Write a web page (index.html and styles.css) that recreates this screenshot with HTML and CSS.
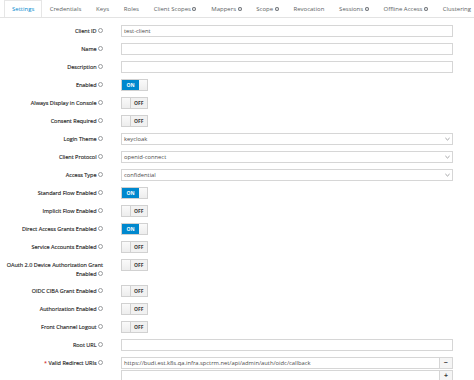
FILE: index.html
```html
<!DOCTYPE html>
<html>
<head>
<meta charset="utf-8">
<link rel="stylesheet" href="styles.css">
</head>
<body>
<div class="tabs">
  <span class="tab active">Settings</span>
  <span class="tab">Credentials</span>
  <span class="tab">Keys</span>
  <span class="tab">Roles</span>
  <span class="tab">Client Scopes <i class="thelp"></i></span>
  <span class="tab">Mappers <i class="thelp"></i></span>
  <span class="tab">Scope <i class="thelp"></i></span>
  <span class="tab">Revocation</span>
  <span class="tab">Sessions <i class="thelp"></i></span>
  <span class="tab">Offline Access <i class="thelp"></i></span>
  <span class="tab">Clustering</span>
</div>
<div class="form">
  <div class="row"><div class="lbl">Client ID <i class="help"></i></div><div class="input">test-client</div></div>
  <div class="row"><div class="lbl">Name <i class="help"></i></div><div class="input"></div></div>
  <div class="row"><div class="lbl">Description <i class="help"></i></div><div class="input"></div></div>
  <div class="row"><div class="lbl">Enabled <i class="help"></i></div><div class="ctl"><div class="switch"><span class="sw-on">ON</span><span class="knob"></span></div></div></div>
  <div class="row"><div class="lbl">Always Display in Console <i class="help"></i></div><div class="ctl"><div class="switch"><span class="knob"></span><span class="sw-off">OFF</span></div></div></div>
  <div class="row"><div class="lbl">Consent Required <i class="help"></i></div><div class="ctl"><div class="switch"><span class="knob"></span><span class="sw-off">OFF</span></div></div></div>
  <div class="row"><div class="lbl">Login Theme <i class="help"></i></div><div class="input select">keycloak<svg class="chev" viewBox="0 0 6 4" width="5" height="4"><path d="M0.5 0.8 L3 3.2 L5.5 0.8" fill="none" stroke="#8b8d8f" stroke-width="1"/></svg></div></div>
  <div class="row"><div class="lbl">Client Protocol <i class="help"></i></div><div class="input select">openid-connect<svg class="chev" viewBox="0 0 6 4" width="5" height="4"><path d="M0.5 0.8 L3 3.2 L5.5 0.8" fill="none" stroke="#8b8d8f" stroke-width="1"/></svg></div></div>
  <div class="row"><div class="lbl">Access Type <i class="help"></i></div><div class="input select">confidential<svg class="chev" viewBox="0 0 6 4" width="5" height="4"><path d="M0.5 0.8 L3 3.2 L5.5 0.8" fill="none" stroke="#8b8d8f" stroke-width="1"/></svg></div></div>
  <div class="row"><div class="lbl">Standard Flow Enabled <i class="help"></i></div><div class="ctl"><div class="switch"><span class="sw-on">ON</span><span class="knob"></span></div></div></div>
  <div class="row"><div class="lbl">Implicit Flow Enabled <i class="help"></i></div><div class="ctl"><div class="switch"><span class="knob"></span><span class="sw-off">OFF</span></div></div></div>
  <div class="row"><div class="lbl">Direct Access Grants Enabled <i class="help"></i></div><div class="ctl"><div class="switch"><span class="sw-on">ON</span><span class="knob"></span></div></div></div>
  <div class="row"><div class="lbl">Service Accounts Enabled <i class="help"></i></div><div class="ctl"><div class="switch"><span class="knob"></span><span class="sw-off">OFF</span></div></div></div>
  <div class="row"><div class="lbl">OAuth 2.0 Device Authorization Grant<br>Enabled <i class="help"></i></div><div class="ctl"><div class="switch"><span class="knob"></span><span class="sw-off">OFF</span></div></div></div>
  <div class="row"><div class="lbl">OIDC CIBA Grant Enabled <i class="help"></i></div><div class="ctl"><div class="switch"><span class="knob"></span><span class="sw-off">OFF</span></div></div></div>
  <div class="row"><div class="lbl">Authorization Enabled <i class="help"></i></div><div class="ctl"><div class="switch"><span class="knob"></span><span class="sw-off">OFF</span></div></div></div>
  <div class="row"><div class="lbl">Front Channel Logout <i class="help"></i></div><div class="ctl"><div class="switch"><span class="knob"></span><span class="sw-off">OFF</span></div></div></div>
  <div class="row"><div class="lbl">Root URL <i class="help"></i></div><div class="input"></div></div>
  <div class="row"><div class="lbl"><span class="req">*</span> Valid Redirect URIs <i class="help"></i></div>
    <div class="multi">
      <div class="igroup"><div class="input grow">https://budi.est.k8s.qa.infra.spctrm.net/api/admin/auth/oidc/callback</div><div class="btn">&minus;</div></div>
      <div class="igroup"><div class="input grow tall"></div><div class="btn">+</div></div>
    </div>
  </div>
</div>
</body>
</html>
```
FILE: styles.css
```css
html, body {
  margin: 0;
  padding: 0;
  height: 380px;
  overflow: hidden;
  background: #fff;
  font-family: "Open Sans", "Liberation Sans", sans-serif;
  color: #363636;
}

.tabs {
  display: flex;
  white-space: nowrap;
  overflow: hidden;
  height: 17px;
  border-bottom: 1px solid #e3e3e3;
  padding-left: 4px;
}

.tab {
  font-size: 6px;
  line-height: 17px;
  padding: 0 6.4px;
  color: #5b5f63;
  border: 1px solid transparent;
  border-bottom: none;
  flex: none;
}

.tab.active {
  color: #0088ce;
  border-color: #e6e6e6;
  background: #fff;
  height: 18px;
  padding: 0 7px;
}

.thelp {
  display: inline-block;
  width: 4px;
  height: 4px;
  border-radius: 50%;
  background: radial-gradient(circle, #fff 0 0.6px, #6a6e73 1px);
  vertical-align: -0.3px;
}

.help {
  display: inline-block;
  width: 3px;
  height: 3px;
  border-radius: 50%;
  border: 0.8px solid #9a9c9e;
  vertical-align: 0;
}

.form {
  padding-top: 7px;
  padding-left: 6px;
}

.row {
  display: grid;
  grid-template-columns: 97px 332px;
  column-gap: 18px;
  margin-bottom: 6px;
  align-items: start;
}

.lbl {
  font-size: 5.5px;
  line-height: 9px;
  padding-top: 2px;
  text-align: right;
  font-weight: 400;
  white-space: nowrap;
  color: #2a2a2a;
  -webkit-text-stroke: 0.15px #2a2a2a;
}

.req {
  color: #c00;
  -webkit-text-stroke: 0;
}

.input {
  box-sizing: border-box;
  height: 12px;
  border: 1px solid #d6d6d6;
  font-size: 5.8px;
  line-height: 10px;
  padding: 0 2px;
  color: #4a4a4a;
  background: #fff;
  white-space: nowrap;
  overflow: hidden;
}

.select {
  display: flex;
  align-items: center;
  justify-content: space-between;
}

.ctl {
  height: 12px;
}

.switch {
  display: flex;
  box-sizing: border-box;
  width: 27px;
  height: 12px;
  border: 1px solid #d1d1d1;
  font-size: 5px;
  font-weight: 700;
  line-height: 10px;
}

.sw-on {
  width: 17px;
  background: #0088ce;
  color: #fff;
  text-align: center;
}

.sw-off {
  width: 17px;
  background: #f1f1f1;
  color: #363636;
  text-align: center;
  border-left: 1px solid #d1d1d1;
}

.knob {
  width: 8px;
  background: linear-gradient(#fafafa, #ededed);
}

.multi {
  display: flex;
  flex-direction: column;
  gap: 1px;
}

.igroup {
  display: flex;
}

.grow {
  flex: 1;
}

.tall {
  height: 20px;
}

.btn {
  box-sizing: border-box;
  width: 13px;
  height: 12px;
  border: 1px solid #d6d6d6;
  border-left: none;
  background: #f5f5f5;
  font-size: 7px;
  font-weight: 700;
  line-height: 10px;
  text-align: center;
  color: #363636;
}
```
